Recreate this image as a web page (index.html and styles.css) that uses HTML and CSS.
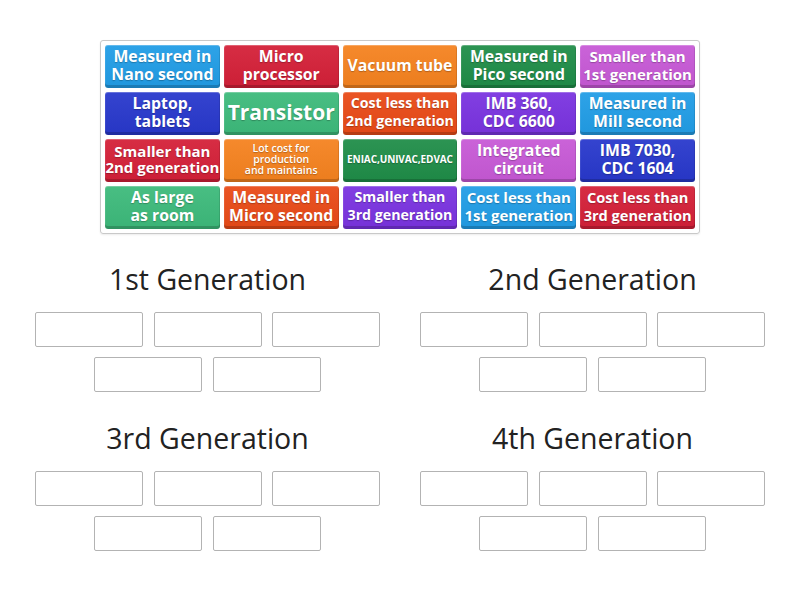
FILE: index.html
```html
<!DOCTYPE html>
<html>
<head>
<meta charset="utf-8">
<link rel="stylesheet" href="styles.css">
</head>
<body>
<div class="bank">
  <div class="tile blue f16"><span>Measured in<br>Nano second</span></div>
  <div class="tile red f16"><span>Micro<br>processor</span></div>
  <div class="tile orange f16"><span>Vacuum tube</span></div>
  <div class="tile dgreen f16"><span>Measured in<br>Pico second</span></div>
  <div class="tile pink"><span>Smaller than<br>1st generation</span></div>

  <div class="tile navy f16"><span>Laptop,<br>tablets</span></div>
  <div class="tile lgreen big"><span>Transistor</span></div>
  <div class="tile redorange f14"><span>Cost less than<br>2nd generation</span></div>
  <div class="tile violet f16"><span>IMB 360,<br>CDC 6600</span></div>
  <div class="tile blue f16"><span>Measured in<br>Mill second</span></div>

  <div class="tile red tight"><span>Smaller than<br>2nd generation</span></div>
  <div class="tile orange small"><span>Lot cost for<br>production<br>and maintains</span></div>
  <div class="tile dgreen tiny"><span>ENIAC,UNIVAC,EDVAC</span></div>
  <div class="tile pink f16"><span>Integrated<br>circuit</span></div>
  <div class="tile navy f16"><span>IMB 7030,<br>CDC 1604</span></div>

  <div class="tile lgreen f16"><span>As large<br>as room</span></div>
  <div class="tile redorange f16"><span>Measured in<br>Micro second</span></div>
  <div class="tile violet f14"><span>Smaller than<br>3rd generation</span></div>
  <div class="tile blue"><span>Cost less than<br>1st generation</span></div>
  <div class="tile red f145"><span>Cost less than<br>3rd generation</span></div>
</div>

<div class="groups">
  <section class="group">
    <h2 class="title">1st Generation</h2>
    <div class="slots"><div class="slot"></div><div class="slot"></div><div class="slot"></div><div class="slot"></div><div class="slot"></div></div>
  </section>
  <section class="group">
    <h2 class="title">2nd Generation</h2>
    <div class="slots"><div class="slot"></div><div class="slot"></div><div class="slot"></div><div class="slot"></div><div class="slot"></div></div>
  </section>
  <section class="group">
    <h2 class="title">3rd Generation</h2>
    <div class="slots"><div class="slot"></div><div class="slot"></div><div class="slot"></div><div class="slot"></div><div class="slot"></div></div>
  </section>
  <section class="group">
    <h2 class="title">4th Generation</h2>
    <div class="slots"><div class="slot"></div><div class="slot"></div><div class="slot"></div><div class="slot"></div><div class="slot"></div></div>
  </section>
</div>
</body>
</html>
```

FILE: styles.css
```css
* { box-sizing: border-box; }
html, body { margin: 0; padding: 0; background: #fff; }
body { font-family: "Open Sans", "Liberation Sans", sans-serif; width: 800px; height: 600px; overflow: hidden; }

.bank {
  width: 600px;
  margin: 40px auto 0;
  padding: 4px;
  border: 1px solid #c9c9c9;
  border-radius: 3px;
  display: grid;
  grid-template-columns: repeat(5, 1fr);
  grid-auto-rows: 43px;
  gap: 4px;
  box-shadow: 0 1px 2px rgba(0,0,0,0.08);
}

.tile {
  display: flex;
  align-items: center;
  justify-content: center;
  text-align: center;
  color: #fff;
  font-weight: 700;
  font-size: 15px;
  line-height: 18px;
  padding-bottom: 3px;
  border-radius: 3px;
  text-shadow: 0 1px 1px rgba(0,0,0,0.25);
  box-shadow: inset 0 1px 0 rgba(255,255,255,0.25), inset 0 -3px 0 rgba(0,0,0,0.18), inset 1px 0 0 rgba(255,255,255,0.08), inset -1px 0 0 rgba(0,0,0,0.1);
  background-image: linear-gradient(to bottom, rgba(255,255,255,0.06), rgba(0,0,0,0.04));
  white-space: nowrap;
}
.tile.f16 { font-size: 15.8px; }
.tile.f145 { font-size: 14.6px; }
.tile.f14 { font-size: 14.2px; }
.tile.tight { font-size: 15px; line-height: 16.5px; }
.tile.big { font-size: 21px; line-height: 24px; }
.tile.small { font-size: 10.5px; line-height: 11px; font-weight: 600; }
.tile.tiny { font-size: 10px; line-height: 12px; font-weight: 700; letter-spacing: -0.1px; }

.blue { background-color: #219de6; }
.red { background-color: #d42038; }
.orange { background-color: #f5821f; }
.dgreen { background-color: #1f8d48; }
.pink { background-color: #c759d6; }
.navy { background-color: #2838cc; }
.lgreen { background-color: #3dba7b; }
.redorange { background-color: #e94a17; }
.violet { background-color: #7a33e0; }

.groups {
  display: grid;
  grid-template-columns: 345px 345px;
  column-gap: 40px;
  padding: 0 35px;
  margin-top: 27px;
  row-gap: 28px;
}

.title {
  margin: 0;
  font-weight: 400;
  font-size: 28.5px;
  line-height: 36px;
  color: #222;
  text-align: center;
}

.slots {
  margin-top: 14.5px;
  display: flex;
  flex-wrap: wrap;
  justify-content: center;
  column-gap: 10.5px;
  row-gap: 10.5px;
}

.slot {
  width: 108px;
  height: 35px;
  border: 1px solid #b3b3b3;
  border-radius: 2px;
  background: #fff;
}
```
